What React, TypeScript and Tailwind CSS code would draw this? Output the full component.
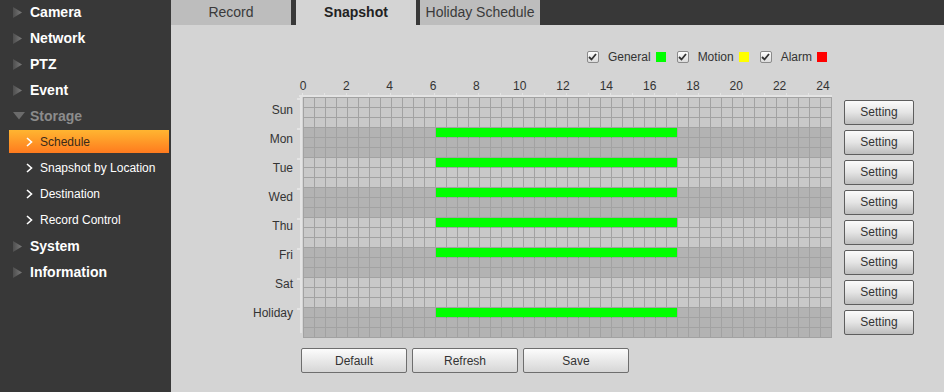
import React from "react";

const font = { fontFamily: '"Liberation Sans", Arial, sans-serif' };

const days = ["Sun", "Mon", "Tue", "Wed", "Thu", "Fri", "Sat", "Holiday"];
const withGeneral = [false, true, true, true, true, true, false, true];
const hours = [0, 2, 4, 6, 8, 10, 12, 14, 16, 18, 20, 22, 24];

function RightTriangle() {
  return (
    <svg width="10" height="11" viewBox="0 0 10 11" className="shrink-0">
      <defs>
        <linearGradient id="tri" x1="0" y1="0" x2="1" y2="0">
          <stop offset="0" stopColor="#4e4e4e" />
          <stop offset="1" stopColor="#7a7a7a" />
        </linearGradient>
      </defs>
      <polygon points="0,0 9,5.5 0,11" fill="url(#tri)" />
    </svg>
  );
}

function DownTriangle() {
  return (
    <svg width="12" height="8" viewBox="0 0 12 8" className="shrink-0">
      <polygon points="0,0 12,0 6,7.5" fill="#6b6b6b" />
    </svg>
  );
}

function Chevron({ color }: { color: string }) {
  return (
    <svg width="7" height="10" viewBox="0 0 7 10" className="shrink-0">
      <polyline points="1,1 5.5,5 1,9" fill="none" stroke={color} strokeWidth="1.6" />
    </svg>
  );
}

function TopItem({ label, dim }: { label: string; dim?: boolean }) {
  return (
    <div className="flex h-[26px] items-center pb-[2px] pl-[13px]">
      {dim ? <DownTriangle /> : <RightTriangle />}
      <span
        className={`text-[14px] font-bold ${dim ? "ml-[5px] text-[#8c8c8c]" : "ml-[7px] text-white"}`}
      >
        {label}
      </span>
    </div>
  );
}

function SubItem({ label, active }: { label: string; active?: boolean }) {
  if (active) {
    return (
      <div className="h-[26px] pl-[9px]">
        <div className="flex h-[23px] w-[160px] items-center bg-gradient-to-b from-[#ffb531] to-[#ff7a1e] pl-[17px]">
          <Chevron color="#ffffff" />
          <span className="ml-[7px] text-[12px] text-[#3a2a1a]">{label}</span>
        </div>
      </div>
    );
  }
  return (
    <div className="flex h-[26px] items-center pb-[2px] pl-[26px]">
      <Chevron color="#ffffff" />
      <span className="ml-[7px] text-[12px] text-white">{label}</span>
    </div>
  );
}

function Sidebar() {
  return (
    <div className="h-[392px] w-[171px] shrink-0 bg-[#383838]">
      <TopItem label="Camera" />
      <TopItem label="Network" />
      <TopItem label="PTZ" />
      <TopItem label="Event" />
      <TopItem label="Storage" dim />
      <SubItem label="Schedule" active />
      <SubItem label="Snapshot by Location" />
      <SubItem label="Destination" />
      <SubItem label="Record Control" />
      <TopItem label="System" />
      <TopItem label="Information" />
    </div>
  );
}

function Tabs() {
  return (
    <div className="flex h-[25px] bg-[#383838]">
      <div className="flex w-[120px] items-center justify-center bg-[#bdbdbd] text-[14px] text-[#3a3a3a]">
        Record
      </div>
      <div className="w-[5px]" />
      <div className="flex w-[120px] items-center justify-center bg-[#d4d4d4] text-[14px] font-bold text-[#222]">
        Snapshot
      </div>
      <div className="w-[4px]" />
      <div className="flex w-[120px] items-center justify-center bg-[#bdbdbd] text-[14px] text-[#3a3a3a]">
        Holiday Schedule
      </div>
    </div>
  );
}

function CheckBox() {
  return (
    <span className="flex h-[12px] w-[12px] items-center justify-center rounded-[2px] border border-[#8a8a8a] bg-gradient-to-b from-[#fdfdfd] to-[#dcdcdc]">
      <svg width="9" height="8" viewBox="0 0 9 8">
        <polyline points="1,4 3.5,6.5 8,1" fill="none" stroke="#333" strokeWidth="1.8" />
      </svg>
    </span>
  );
}

function Legend() {
  const items = [
    { label: "General", color: "bg-[#00ff00]" },
    { label: "Motion", color: "bg-[#ffff00]" },
    { label: "Alarm", color: "bg-[#ff0000]" },
  ];
  return (
    <div className="mt-[26px] flex h-[12px] items-center justify-end gap-[11px] pr-[117px]">
      {items.map((it) => (
        <div key={it.label} className="flex items-center">
          <CheckBox />
          <span className="ml-[9px] text-[12px] leading-none text-[#333]">{it.label}</span>
          <span className={`ml-[5px] h-[10px] w-[10px] ${it.color}`} />
        </div>
      ))}
    </div>
  );
}

function DayBlock({ index }: { index: number }) {
  const light = index % 2 === 0;
  const cellBg = light ? "bg-[#c9c9c9]" : "bg-[#b3b3b3]";
  return (
    <div>
      {[0, 1, 2].map((sub) => (
        <div key={sub} className="grid grid-cols-[repeat(48,11px)]">
          {Array.from({ length: 48 }, (_, c) => {
            const green = sub === 0 && withGeneral[index] && c >= 12 && c <= 33;
            return (
              <div
                key={c}
                className={`h-[10px] border-b border-r ${
                  green
                    ? c < 33
                      ? "border-r-[#00ff00] border-b-[#a2a2a2] bg-[#00ff00]"
                      : "border-[#a2a2a2] bg-[#00ff00]"
                    : `border-[#a2a2a2] ${cellBg}`
                }`}
              />
            );
          })}
        </div>
      ))}
    </div>
  );
}

function SettingButton() {
  return (
    <button className="h-[25px] w-[70px] rounded-[2px] border border-[#5e5e5e] bg-gradient-to-b from-[#fbfbfb] via-[#e4e4e4] to-[#bdbdbd] text-[12px] text-[#333]">
      Setting
    </button>
  );
}

function ActionButton({ label }: { label: string }) {
  return (
    <button className="h-[25px] w-[106px] rounded-[2px] border border-[#6e6e6e] bg-gradient-to-b from-[#fcfcfc] to-[#d6d6d6] text-[12px] text-[#333]">
      {label}
    </button>
  );
}

function Schedule() {
  return (
    <div>
      {/* hour labels */}
      <div className="ml-[132px] mt-[16px] flex h-[14px] w-[520px] justify-between">
        {hours.map((h) => (
          <div key={h} className="flex w-0 justify-center">
            <span className="text-[12px] leading-[14px] text-[#333]">{h}</span>
          </div>
        ))}
      </div>
      {/* top axis */}
      <div className="ml-[128px] flex h-[4px] w-[533px] border-b-2 border-[#e4e4e4]">
        <div className="w-[3px]" />
        {Array.from({ length: 24 }, (_, i) => (
          <div key={i} className="h-[2px] w-[22px] border-l border-[#e4e4e4]" />
        ))}
      </div>
      <div className="flex">
        {/* day labels */}
        <div className="w-[122px]">
          {days.map((d) => (
            <div key={d} className="flex h-[29px] items-center justify-end pb-[3px] text-[12px] text-[#333]">
              {d}
            </div>
          ))}
        </div>
        <div className="ml-[4px] w-[3px] pt-[1px]">
          {days.map((d) => (
            <div key={d} className="h-[30px] border-t-2 border-[#e4e4e4]" />
          ))}
        </div>
        <div className="h-[236px] w-[2px] bg-[#e4e4e4]" />
        <div className="ml-[1px] self-start border-l border-t border-[#a2a2a2]">
          {days.map((d, i) => (
            <DayBlock key={d} index={i} />
          ))}
        </div>
        <div className="ml-[12px] pt-[2px]">
          {days.map((d) => (
            <div key={d} className="h-[30px]">
              <SettingButton />
            </div>
          ))}
        </div>
      </div>
      <div className="ml-[130px] mt-[9px] flex gap-[5px]">
        <ActionButton label="Default" />
        <ActionButton label="Refresh" />
        <ActionButton label="Save" />
      </div>
    </div>
  );
}

export default function App() {
  return (
    <div className="flex h-[392px] w-[944px] overflow-hidden bg-[#d4d4d4]" style={font}>
      <Sidebar />
      <div className="flex-1">
        <Tabs />
        <Legend />
        <Schedule />
      </div>
    </div>
  );
}
